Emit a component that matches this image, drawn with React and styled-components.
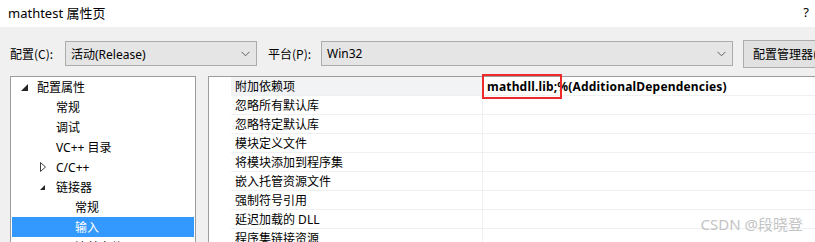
import React from "react";
import styled, { createGlobalStyle } from "styled-components";

const GlobalStyle = createGlobalStyle`
  body {
    margin: 0;
    background: #f0f0f0;
    font-family: "Noto Sans", "Noto Sans CJK SC", sans-serif;
    font-size: 12px;
    color: #000;
  }
`;

const Window = styled.div`
  width: 815px;
  height: 242px;
  overflow: hidden;
  position: relative;
  background: #f0f0f0;
`;

const TitleBar = styled.div`
  height: 27px;
  background: #fff;
  display: flex;
  align-items: center;
  justify-content: space-between;
  padding: 0 8px 3px 8px;
  box-sizing: border-box;
  font-size: 13px;
`;

const Help = styled.span`
  font-size: 13px;
  margin-right: -2px;
`;

const Toolbar = styled.div`
  display: flex;
  align-items: center;
  height: 25px;
  margin-top: 14px;
  padding-left: 10px;
`;

const Label = styled.span`
  width: ${(p) => p.width}px;
  flex: none;
  font-family: "Noto Sans CJK SC", sans-serif;
`;

const Combo = styled.div`
  width: ${(p) => p.width}px;
  height: 25px;
  box-sizing: border-box;
  flex: none;
  display: flex;
  align-items: center;
  justify-content: space-between;
  padding: 0 6px 0 5px;
  background: #e5e5e5;
  border: 1px solid #acacac;
  margin-right: ${(p) => p.gap}px;
`;

const Chevron = () => (
  <svg width="9" height="6" viewBox="0 0 9 6">
    <path d="M0.5 0.8 L4.5 4.8 L8.5 0.8" fill="none" stroke="#606060" strokeWidth="1" />
  </svg>
);

const Button = styled.div`
  height: 28px;
  width: 100px;
  flex: none;
  box-sizing: border-box;
  border: 1px solid #adadad;
  background: #e1e1e1;
  display: flex;
  align-items: center;
  padding-left: 9px;
  font-family: "Noto Sans CJK SC", sans-serif;
`;

const Main = styled.div`
  display: flex;
  margin-top: 10px;
  padding-left: 10px;
  gap: 12px;
`;

const Tree = styled.div`
  width: 186px;
  height: 200px;
  flex: none;
  box-sizing: border-box;
  background: #fff;
  border: 1px solid #9c9c9c;
  font-family: "Noto Sans", "Noto Sans CJK SC", sans-serif;
`;

const TreeRow = styled.div`
  height: 20px;
  display: flex;
  align-items: center;
  padding-left: ${(p) => 9 + p.level * 19}px;
  margin: 0 1px;
  background: ${(p) => (p.selected ? "#3399ff" : "transparent")};
  color: ${(p) => (p.selected ? "#fff" : "#000")};
`;

const Expander = styled.span`
  width: 16px;
  flex: none;
  display: flex;
  align-items: center;
`;

const Open = ({ size }) => (
  <svg width={size} height={size} viewBox="0 0 6 6">
    <polygon points="6,0 6,6 0,6" fill="#262626" />
  </svg>
);

const Closed = () => (
  <svg width="6" height="10" viewBox="0 0 6 10">
    <polygon points="0.5,0.5 5.5,5 0.5,9.5" fill="#fff" stroke="#404040" strokeWidth="1" />
  </svg>
);

const Grid = styled.div`
  width: 620px;
  height: 200px;
  flex: none;
  box-sizing: border-box;
  background: #fff;
  border: 1px solid #9c9c9c;
  border-right: none;
  padding-left: 22px;
`;

const GridRow = styled.div`
  display: flex;
  height: 19px;
  border-bottom: 1px solid #eef0f4;
  box-sizing: border-box;
`;

const NameCell = styled.div`
  width: 252px;
  flex: none;
  display: flex;
  align-items: center;
  padding-left: 4px;
  box-sizing: border-box;
  background: ${(p) => (p.active ? "#f2f3f5" : "#fff")};
  border-right: 1px solid #eef0f4;
`;

const ValueCell = styled.div`
  flex: 1;
  position: relative;
  display: flex;
  align-items: center;
  padding-left: 4px;
  font-weight: bold;
  font-size: 12px;
  letter-spacing: 0.18px;
`;

const Highlight = styled.div`
  position: absolute;
  left: -1px;
  top: -3px;
  width: 80px;
  height: 25px;
  box-sizing: border-box;
  border: 2px solid #ee2a2a;
`;

const Watermark = styled.div`
  position: absolute;
  right: 12px;
  bottom: 8px;
  color: #c4c4c4;
  font-size: 15px;
  font-family: "Noto Sans", "Noto Sans CJK SC", sans-serif;
`;

const treeItems = [
  { text: "配置属性", level: 0, exp: "open" },
  { text: "常规", level: 1 },
  { text: "调试", level: 1 },
  { text: "VC++ 目录", level: 1 },
  { text: "C/C++", level: 1, exp: "closed" },
  { text: "链接器", level: 1, exp: "small" },
  { text: "常规", level: 2 },
  { text: "输入", level: 2, selected: true },
  { text: "清单文件", level: 2 },
];

const props = [
  "附加依赖项",
  "忽略所有默认库",
  "忽略特定默认库",
  "模块定义文件",
  "将模块添加到程序集",
  "嵌入托管资源文件",
  "强制符号引用",
  "延迟加载的 DLL",
  "程序集链接资源",
];

export default function App() {
  return (
    <Window>
      <GlobalStyle />
      <TitleBar>
        <span>mathtest 属性页</span>
        <Help>?</Help>
      </TitleBar>
      <Toolbar>
        <Label width={55}>配置(C):</Label>
        <Combo width={192} gap={11}>
          <span>活动(Release)</span>
          <Chevron />
        </Combo>
        <Label width={53}>平台(P):</Label>
        <Combo width={412} gap={10}>
          <span>Win32</span>
          <Chevron />
        </Combo>
        <Button>配置管理器(O)...</Button>
      </Toolbar>
      <Main>
        <Tree>
          {treeItems.map((t, i) => (
            <TreeRow key={i} level={t.level} selected={t.selected}>
              <Expander>
                {t.exp === "open" && <Open size={7} />}
                {t.exp === "small" && <Open size={5} />}
                {t.exp === "closed" && <Closed />}
              </Expander>
              {t.text}
            </TreeRow>
          ))}
        </Tree>
        <Grid>
          {props.map((p, i) => (
            <GridRow key={i}>
              <NameCell active={i === 0}>{p}</NameCell>
              <ValueCell>
                {i === 0 && (
                  <>
                    mathdll.lib;%(AdditionalDependencies)
                    <Highlight />
                  </>
                )}
              </ValueCell>
            </GridRow>
          ))}
        </Grid>
      </Main>
      <Watermark>CSDN @段晓登</Watermark>
    </Window>
  );
}
